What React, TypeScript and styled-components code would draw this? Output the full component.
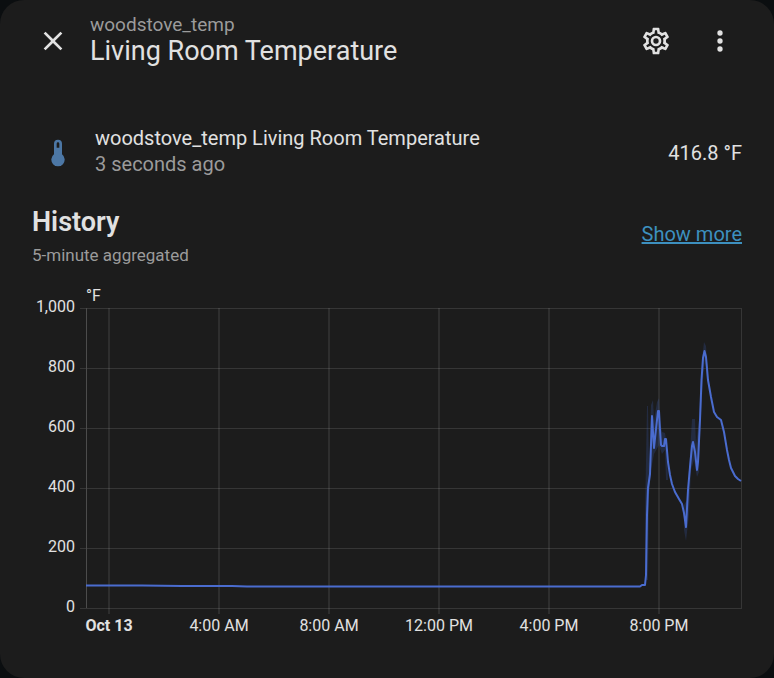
import React from "react";
import styled, { createGlobalStyle } from "styled-components";

const GlobalStyle = createGlobalStyle`
  * { box-sizing: border-box; }
  body {
    margin: 0;
    background: #0b0e10;
    color: #e1e1e1;
    font-family: Roboto, "Liberation Sans", sans-serif;
  }
`;

const Dialog = styled.main`
  min-height: 100vh;
  background: #1c1c1c;
  border-radius: 24px;
  overflow: hidden;
`;

const Header = styled.header`
  display: flex;
  align-items: center;
  gap: 16px;
  padding: 9px 22px 0 21px;
`;

const Titles = styled.div`
  flex: 1;
  min-width: 0;
  padding-bottom: 4px;
  margin-left: -11px;
`;

const Breadcrumb = styled.p`
  margin: 0;
  color: #9b9b9b;
  font-size: 19px;
  line-height: 24px;
`;

const Title = styled.h1`
  margin: 0;
  font-size: 27px;
  font-weight: 400;
  line-height: 28px;
`;

const IconButton = styled.button`
  display: flex;
  align-items: center;
  justify-content: center;
  flex: none;
  width: 64px;
  height: 64px;
  margin: 0;
  padding: 0;
  border: 0;
  background: none;
  color: inherit;
  cursor: pointer;
`;

const Actions = styled.div`
  display: flex;
`;

const Icon = styled.svg`
  display: block;
  width: 32px;
  height: 32px;
  fill: currentColor;
`;

const Content = styled.div`
  padding: 52px 32px 0;
`;

const StateRow = styled.section`
  display: flex;
  align-items: center;
  padding-left: 10px;
`;

const StateIcon = styled.span`
  padding-top: 4px;
  color: #4c77a5;
`;

const StateInfo = styled.div`
  flex: 1;
  min-width: 0;
  padding-left: 21px;
`;

const EntityName = styled.div`
  font-size: 20px;
  line-height: 26px;
`;

const Elapsed = styled.div`
  color: #9b9b9b;
  font-size: 20px;
  line-height: 26px;
`;

const StateValue = styled.div`
  padding-top: 4px;
  font-size: 20px;
  line-height: 26px;
`;

const HistoryHeader = styled.div`
  display: flex;
  align-items: center;
  justify-content: space-between;
  padding-top: 26px;
`;

const HistoryTitle = styled.h2`
  margin: 0;
  font-size: 27px;
  font-weight: 600;
  line-height: 38px;
`;

const Note = styled.p`
  margin: 0;
  color: #9b9b9b;
  font-size: 17px;
  line-height: 28px;
`;

const MoreLink = styled.a`
  padding-bottom: 4px;
  color: #3d90bf;
  font-size: 20px;
  line-height: 26px;
`;

const Chart = styled.svg`
  display: block;
  width: 100%;
  height: auto;
  margin-top: 11px;
  overflow: visible;
`;

const ChartLabel = styled.text<{ $strong?: boolean }>`
  fill: #e1e1e1;
  font-size: 16px;
  font-weight: ${(p) => (p.$strong ? 700 : 400)};
`;

const icons = {
  close:
    "M19,6.41L17.59,5L12,10.59L6.41,5L5,6.41L10.59,12L5,17.59L6.41,19L12,13.41L17.59,19L19,17.59L13.41,12L19,6.41Z",
  cog: "M12,8A4,4 0 0,1 16,12A4,4 0 0,1 12,16A4,4 0 0,1 8,12A4,4 0 0,1 12,8M12,10A2,2 0 0,0 10,12A2,2 0 0,0 12,14A2,2 0 0,0 14,12A2,2 0 0,0 12,10M10,22C9.75,22 9.54,21.82 9.5,21.58L9.13,18.93C8.5,18.68 7.96,18.34 7.44,17.94L4.95,18.95C4.73,19.03 4.46,18.95 4.34,18.73L2.34,15.27C2.21,15.05 2.27,14.78 2.46,14.63L4.57,12.97L4.5,12L4.57,11L2.46,9.37C2.27,9.22 2.21,8.95 2.34,8.73L4.34,5.27C4.46,5.05 4.73,4.96 4.95,5.05L7.44,6.05C7.96,5.66 8.5,5.32 9.13,5.07L9.5,2.42C9.54,2.18 9.75,2 10,2H14C14.25,2 14.46,2.18 14.5,2.42L14.87,5.07C15.5,5.32 16.04,5.66 16.56,6.05L19.05,5.05C19.27,4.96 19.54,5.05 19.66,5.27L21.66,8.73C21.79,8.95 21.73,9.22 21.54,9.37L19.43,11L19.5,12L19.43,13L21.54,14.63C21.73,14.78 21.79,15.05 21.66,15.27L19.66,18.73C19.54,18.95 19.27,19.04 19.05,18.95L16.56,17.95C16.04,18.34 15.5,18.68 14.87,18.93L14.5,21.58C14.46,21.82 14.25,22 14,22H10M11.25,4L10.88,6.61C9.68,6.86 8.62,7.5 7.85,8.39L5.44,7.35L4.69,8.65L6.8,10.2C6.4,11.37 6.4,12.64 6.8,13.8L4.68,15.36L5.43,16.66L7.86,15.62C8.63,16.5 9.68,17.14 10.87,17.38L11.24,20H12.76L13.13,17.39C14.32,17.14 15.37,16.5 16.14,15.62L18.57,16.66L19.32,15.36L17.2,13.81C17.6,12.64 17.6,11.37 17.2,10.2L19.31,8.65L18.56,7.35L16.15,8.39C15.38,7.5 14.32,6.86 13.12,6.62L12.75,4H11.25Z",
  dots: "M12,16A2,2 0 0,1 14,18A2,2 0 0,1 12,20A2,2 0 0,1 10,18A2,2 0 0,1 12,16M12,10A2,2 0 0,1 14,12A2,2 0 0,1 12,14A2,2 0 0,1 10,12A2,2 0 0,1 12,10M12,4A2,2 0 0,1 14,6A2,2 0 0,1 12,8A2,2 0 0,1 10,6A2,2 0 0,1 12,4Z",
  thermometer:
    "M15 13V5A3 3 0 0 0 9 5V13A5 5 0 1 0 15 13M12 4A1 1 0 0 1 13 5V8H11V5A1 1 0 0 1 12 4Z",
};

function Glyph({ name }: { name: keyof typeof icons }) {
  return (
    <Icon viewBox="0 0 24 24" aria-hidden="true">
      <path d={icons[name]} />
    </Icon>
  );
}

const yTicks = ["1,000", "800", "600", "400", "200", "0"];
const xTicks = [
  { label: "Oct 13", x: 77 },
  { label: "4:00 AM", x: 187 },
  { label: "8:00 AM", x: 297 },
  { label: "12:00 PM", x: 407 },
  { label: "4:00 PM", x: 517 },
  { label: "8:00 PM", x: 627 },
];

const meanLine =
  "M54 305.5 H110 L150 306 H200 L215 306.5 H608 L610 305 H613 L614 295 L615 235 L616 208 L618 194 L619 165 L620 136 L622 168 L624 149 L626 131 L627 131 L628 150 L629 165 L630 166 H632 L633 159 H634 L636 182 L638 195 L640 204 L643 212 L647 219 L650 224 L652 233 L654 247 L656 210 L658 187 L660 166 L661 162 L663 172 L665 190 L666 182 L668 140 L669.5 100 L671 78 L672.5 71 L674 77 L676 100 L679 117 L682 132 L685 137 L689 140 L692 152 L695 170 L697 180 L699 188 L703 196 L706 199 L709 201";

const rangeBand =
  "M613 300 V235 L615 126 H616 L617 185 L619 125 L621 120 L622 140 L625 122 L627 118 L628 140 L630 152 L633 153 L635 165 L636 200 H634 L633 170 L630 174 L627 165 L622 174 L619 190 L617 215 L616 300 Z M652 225 L655 220 L657 190 L660 139 H663 L664 165 L667 140 L670 80 L672 62 L674 66 L676 95 L675 102 L673 78 L671 100 L668 150 L667 192 L665 197 L662 180 L659 190 L657 235 L654 261 L652 250 Z";

function HistoryChart() {
  return (
    <Chart viewBox="0 0 710 360" role="img" aria-label="Temperature history">
      <g fill="#363636">
        {yTicks.map((t, i) => (
          <rect key={t} x="48" y={28 + i * 60} width="662" height="1" />
        ))}
        <rect x="709" y="28" width="1" height="300" />
      </g>
      <g fill="#ffffff" opacity="0.08">
        {xTicks.map((t) => (
          <rect key={t.label} x={t.x - 1} y="28" width="2" height="306" />
        ))}
      </g>
      <rect x="54" y="28" width="1" height="300" fill="#4c4c4c" />
      <path d={rangeBand} fill="#4269d0" opacity="0.2" />
      <path
        d={meanLine}
        fill="none"
        stroke="#4a6ccf"
        strokeWidth="2"
        strokeLinejoin="round"
      />
      <ChartLabel x="54" y="21">
        °F
      </ChartLabel>
      {yTicks.map((t, i) => (
        <ChartLabel key={t} x="43" y={32 + i * 60} textAnchor="end">
          {t}
        </ChartLabel>
      ))}
      {xTicks.map((t, i) => (
        <ChartLabel
          key={t.label}
          x={t.x}
          y="351"
          textAnchor="middle"
          $strong={i === 0}
        >
          {t.label}
        </ChartLabel>
      ))}
    </Chart>
  );
}

export default function App() {
  return (
    <>
      <GlobalStyle />
      <Dialog>
        <Header>
          <IconButton type="button" aria-label="Close">
            <Glyph name="close" />
          </IconButton>
          <Titles>
            <Breadcrumb>woodstove_temp</Breadcrumb>
            <Title>Living Room Temperature</Title>
          </Titles>
          <Actions>
            <IconButton type="button" aria-label="Settings">
              <Glyph name="cog" />
            </IconButton>
            <IconButton type="button" aria-label="More options">
              <Glyph name="dots" />
            </IconButton>
          </Actions>
        </Header>
        <Content>
          <StateRow>
            <StateIcon>
              <Glyph name="thermometer" />
            </StateIcon>
            <StateInfo>
              <EntityName>woodstove_temp Living Room Temperature</EntityName>
              <Elapsed>3 seconds ago</Elapsed>
            </StateInfo>
            <StateValue>416.8 °F</StateValue>
          </StateRow>
          <HistoryHeader>
            <div>
              <HistoryTitle>History</HistoryTitle>
              <Note>5-minute aggregated</Note>
            </div>
            <MoreLink href="#history">Show more</MoreLink>
          </HistoryHeader>
          <HistoryChart />
        </Content>
      </Dialog>
    </>
  );
}
